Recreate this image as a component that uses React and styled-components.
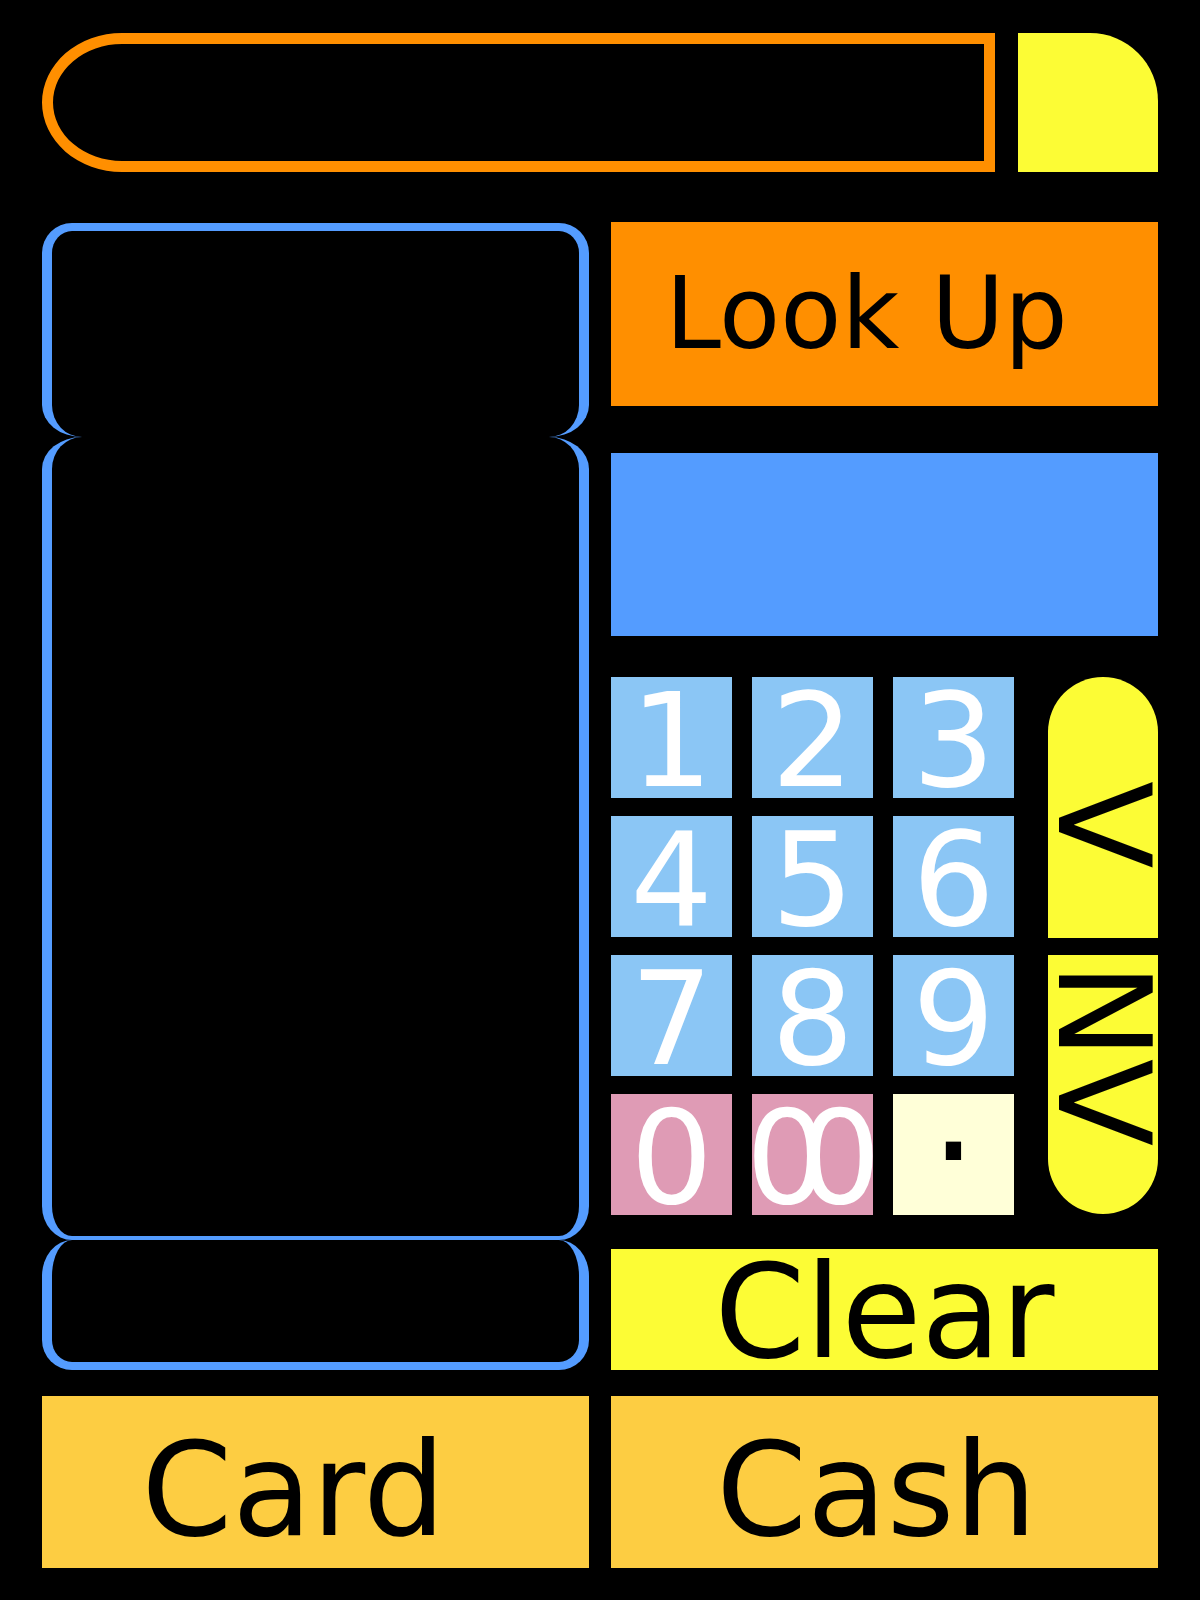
import React from "react";
import styled, { createGlobalStyle } from "styled-components";

const GlobalStyle = createGlobalStyle`
  html, body {
    margin: 0;
    padding: 0;
    background: #000;
  }
  body {
    font-family: "DejaVu Sans", "Noto Sans", sans-serif;
  }
`;

const Page = styled.div`
  width: 1200px;
  min-height: 1600px;
  box-sizing: border-box;
  padding: 33px 42px 0;
  display: flex;
  flex-direction: column;
  background: #000;
`;

const TopBar = styled.div`
  display: flex;
  gap: 23px;
  height: 139px;
  margin-bottom: 50px;
`;

const SearchField = styled.div`
  flex: 1;
  box-sizing: border-box;
  border: 11px solid #ff8f00;
  border-radius: 80px 0 0 80px / 69.5px 0 0 69.5px;
`;

const CornerTab = styled.div`
  width: 140px;
  background: #fcfc35;
  border-top-right-radius: 68px;
`;

const Main = styled.div`
  display: grid;
  grid-template-columns: 547px 547px;
  column-gap: 22px;
`;

const LeftColumn = styled.div`
  display: flex;
  flex-direction: column;
  padding-top: 1px;
`;

const Panel = styled.div`
  box-sizing: border-box;
  height: ${(p) => p.$h}px;
  border-style: solid;
  border-color: #549cff;
  border-width: ${(p) => p.$bw};
  border-radius: ${(p) => p.$r};
`;

const RightColumn = styled.div`
  display: flex;
  flex-direction: column;
`;

const ActionButton = styled.div`
  box-sizing: border-box;
  height: ${(p) => p.$h}px;
  margin-top: ${(p) => p.$mt || 0}px;
  display: flex;
  align-items: center;
  justify-content: center;
  background: ${(p) => p.$bg};
  color: #000;
  font-size: ${(p) => p.$fs || 130}px;
  line-height: ${(p) => (p.$fs ? p.$fs : 110)}px;
  padding-top: ${(p) => p.$pt || 0}px;
  padding-right: ${(p) => p.$pr || 0}px;
  white-space: nowrap;
`;

const Keypad = styled.div`
  display: flex;
  justify-content: space-between;
  height: 537px;
  margin-top: 41px;
`;

const Digits = styled.div`
  display: grid;
  grid-template-columns: repeat(3, 121px);
  grid-template-rows: repeat(4, 121px);
  column-gap: 20px;
  row-gap: 18px;
`;

const Key = styled.div`
  box-sizing: border-box;
  display: flex;
  align-items: center;
  justify-content: center;
  background: ${(p) => p.$bg};
  color: ${(p) => p.$fg || "#fff"};
  font-size: ${(p) => p.$fs || 130}px;
  line-height: 100px;
  padding-top: ${(p) => p.$pt ?? 7}px;
  padding-bottom: ${(p) => p.$pb || 0}px;
  white-space: nowrap;
`;

const KeyLabel = styled.span`
  letter-spacing: ${(p) => (p.$tight ? "-30px" : "0")};
  margin-right: ${(p) => (p.$tight ? "28px" : "0")};
`;

const Scroller = styled.div`
  width: 110px;
  display: flex;
  flex-direction: column;
  gap: 17px;
`;

const ScrollButton = styled.div`
  height: ${(p) => p.$h}px;
  box-sizing: border-box;
  background: #fcfc35;
  border-radius: ${(p) => (p.$up ? "55px 55px 0 0" : "0 0 55px 55px")};
  display: flex;
  justify-content: center;
  align-items: flex-start;
  padding-top: ${(p) => p.$pt}px;
`;

const VerticalGlyphs = styled.span`
  writing-mode: vertical-rl;
  text-orientation: mixed;
  font-size: 128px;
  line-height: 110px;
  color: #000;
  white-space: nowrap;
`;

const BottomRow = styled.div`
  display: grid;
  grid-template-columns: 547px 547px;
  column-gap: 22px;
  margin-top: 26px;
`;

const keys = [
  { label: "1", bg: "#8bc6f5" },
  { label: "2", bg: "#8bc6f5" },
  { label: "3", bg: "#8bc6f5" },
  { label: "4", bg: "#8bc6f5" },
  { label: "5", bg: "#8bc6f5" },
  { label: "6", bg: "#8bc6f5" },
  { label: "7", bg: "#8bc6f5" },
  { label: "8", bg: "#8bc6f5" },
  { label: "9", bg: "#8bc6f5" },
  { label: "0", bg: "#df9bb5" },
  { label: "00", bg: "#df9bb5", tight: true },
  { label: "\u00b7", bg: "#ffffd8", fg: "#000", fs: 148, pt: 0, pb: 8 },
];

export default function App() {
  return (
    <>
      <GlobalStyle />
      <Page>
        <TopBar>
          <SearchField />
          <CornerTab />
        </TopBar>
        <Main>
          <LeftColumn>
            <Panel
              $h={214}
              $bw="8px 10px 0 10px"
              $r="30px 30px 40px 40px / 30px 30px 32px 32px"
            />
            <Panel
              $h={803}
              $bw="0 10px 4px 10px"
              $r="40px 40px 30px 30px / 32px 32px 34px 34px"
            />
            <Panel
              $h={130}
              $bw="0 10px 8px 10px"
              $r="30px 30px 30px 30px / 36px 36px 30px 30px"
            />
          </LeftColumn>
          <RightColumn>
            <ActionButton $h={184} $bg="#ff8f00" $fs={100} $pr={36}>
              Look Up
            </ActionButton>
            <ActionButton $h={183} $mt={47} $bg="#549cff" />
            <Keypad>
              <Digits>
                {keys.map((k) => (
                  <Key
                    key={k.label}
                    $bg={k.bg}
                    $fg={k.fg}
                    $fs={k.fs}
                    $pt={k.pt}
                    $pb={k.pb}
                  >
                    <KeyLabel $tight={k.tight}>{k.label}</KeyLabel>
                  </Key>
                ))}
              </Digits>
              <Scroller>
                <ScrollButton $up $h={261} $pt={104}>
                  <VerticalGlyphs>V</VerticalGlyphs>
                </ScrollButton>
                <ScrollButton $h={259} $pt={8}>
                  <VerticalGlyphs>NV</VerticalGlyphs>
                </ScrollButton>
              </Scroller>
            </Keypad>
            <ActionButton $h={121} $mt={35} $bg="#fcfc35" $pt={5}>
              Clear
            </ActionButton>
          </RightColumn>
        </Main>
        <BottomRow>
          <ActionButton $h={172} $bg="#fdcd42" $pt={16} $pr={44}>
            Card
          </ActionButton>
          <ActionButton $h={172} $bg="#fdcd42" $pt={16} $pr={16}>
            Cash
          </ActionButton>
        </BottomRow>
      </Page>
    </>
  );
}
